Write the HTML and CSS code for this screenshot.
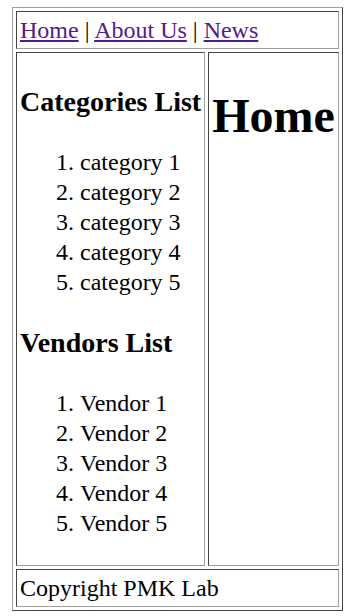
FILE: index.html
```html
<!DOCTYPE html>
<html>
<head>
<meta charset="utf-8">
<title>Home</title>
<link rel="stylesheet" href="styles.css">
</head>
<body>
<table class="layout">
  <tr>
    <td class="nav" colspan="2"><a href="#">Home</a> | <a href="#">About Us</a> | <a href="#">News</a></td>
  </tr>
  <tr>
    <td class="sidebar">
      <h3>Categories List</h3>
      <ol>
        <li>category 1</li>
        <li>category 2</li>
        <li>category 3</li>
        <li>category 4</li>
        <li>category 5</li>
      </ol>
      <h3>Vendors List</h3>
      <ol>
        <li>Vendor 1</li>
        <li>Vendor 2</li>
        <li>Vendor 3</li>
        <li>Vendor 4</li>
        <li>Vendor 5</li>
      </ol>
    </td>
    <td class="main">
      <h1>Home</h1>
    </td>
  </tr>
  <tr>
    <td class="footer" colspan="2">Copyright PMK Lab</td>
  </tr>
</table>
</body>
</html>
```
FILE: styles.css
```css
html, body {
  background: #ffffff;
}
body {
  margin: 7px 0 0 12px;
  font-family: "Liberation Serif", "Times New Roman", serif;
  font-size: 24px;
  line-height: 1.25;
  color: #000000;
}
.layout {
  border-collapse: separate;
  border-spacing: 3px;
  border: 1px solid;
  border-color: #a0a0a0 #444444 #444444 #a0a0a0;
}
.layout td {
  padding: 3px;
  border: 1px solid;
  border-color: #444444 #a0a0a0 #a0a0a0 #444444;
}
.nav a {
  color: #551a8b;
  text-decoration: underline;
}
.sidebar {
  vertical-align: middle;
}
.sidebar h3 {
  font-size: 28px;
  font-weight: bold;
  margin: 28px 0;
  line-height: 35px;
}
.sidebar ol {
  margin: 24px 0;
  padding-left: 60px;
}
.main {
  vertical-align: top;
}
.main h1 {
  font-size: 48px;
  font-weight: bold;
  margin: 32px 0;
  line-height: normal;
}
.footer {
  white-space: nowrap;
}
```
